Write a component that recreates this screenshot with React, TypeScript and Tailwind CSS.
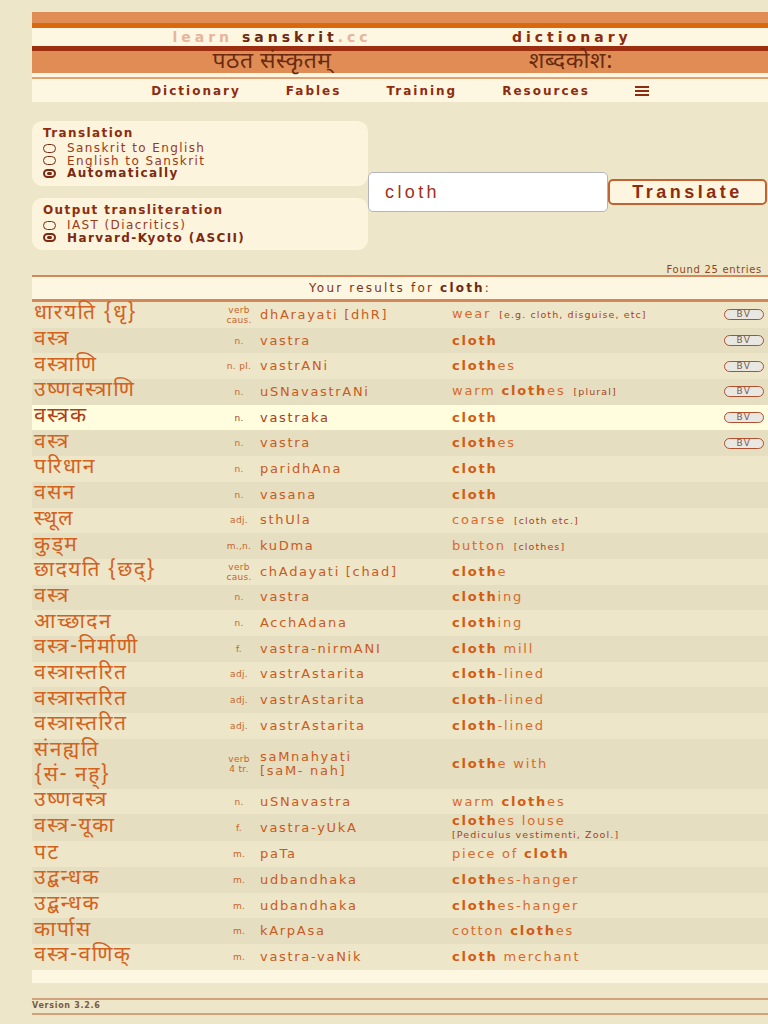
import React from "react";

type Entry = {
  dev: string | string[];
  gram: string[];
  tr: string | string[];
  en: string;
  note?: string;
  noteBelow?: boolean;
  bv?: boolean;
  hot?: boolean;
};

// "*cloth*es" -> bold "cloth" + plain "es"
const entries: Entry[] = [
  { dev: "धारयति {धृ}", gram: ["verb", "caus."], tr: "dhArayati [dhR]", en: "wear", note: "[e.g. cloth, disguise, etc]", bv: true },
  { dev: "वस्त्र", gram: ["n."], tr: "vastra", en: "*cloth*", bv: true },
  { dev: "वस्त्राणि", gram: ["n. pl."], tr: "vastrANi", en: "*cloth*es", bv: true },
  { dev: "उष्णवस्त्राणि", gram: ["n."], tr: "uSNavastrANi", en: "warm *cloth*es", note: "[plural]", bv: true },
  { dev: "वस्त्रक", gram: ["n."], tr: "vastraka", en: "*cloth*", bv: true, hot: true },
  { dev: "वस्त्र", gram: ["n."], tr: "vastra", en: "*cloth*es", bv: true },
  { dev: "परिधान", gram: ["n."], tr: "paridhAna", en: "*cloth*" },
  { dev: "वसन", gram: ["n."], tr: "vasana", en: "*cloth*" },
  { dev: "स्थूल", gram: ["adj."], tr: "sthUla", en: "coarse", note: "[cloth etc.]" },
  { dev: "कुड्म", gram: ["m.,n."], tr: "kuDma", en: "button", note: "[clothes]" },
  { dev: "छादयति {छद्}", gram: ["verb", "caus."], tr: "chAdayati [chad]", en: "*cloth*e" },
  { dev: "वस्त्र", gram: ["n."], tr: "vastra", en: "*cloth*ing" },
  { dev: "आच्छादन", gram: ["n."], tr: "AcchAdana", en: "*cloth*ing" },
  { dev: "वस्त्र-निर्माणी", gram: ["f."], tr: "vastra-nirmANI", en: "*cloth* mill" },
  { dev: "वस्त्रास्तरित", gram: ["adj."], tr: "vastrAstarita", en: "*cloth*-lined" },
  { dev: "वस्त्रास्तरित", gram: ["adj."], tr: "vastrAstarita", en: "*cloth*-lined" },
  { dev: "वस्त्रास्तरित", gram: ["adj."], tr: "vastrAstarita", en: "*cloth*-lined" },
  { dev: ["संनह्यति", "{सं- नह्}"], gram: ["verb", "4 tr."], tr: ["saMnahyati", "[saM- nah]"], en: "*cloth*e with" },
  { dev: "उष्णवस्त्र", gram: ["n."], tr: "uSNavastra", en: "warm *cloth*es" },
  { dev: "वस्त्र-यूका", gram: ["f."], tr: "vastra-yUkA", en: "*cloth*es louse", note: "[Pediculus vestimenti, Zool.]", noteBelow: true },
  { dev: "पट", gram: ["m."], tr: "paTa", en: "piece of *cloth*" },
  { dev: "उद्बन्धक", gram: ["m."], tr: "udbandhaka", en: "*cloth*es-hanger" },
  { dev: "उद्बन्धक", gram: ["m."], tr: "udbandhaka", en: "*cloth*es-hanger" },
  { dev: "कार्पास", gram: ["m."], tr: "kArpAsa", en: "cotton *cloth*es" },
  { dev: "वस्त्र-वणिक्", gram: ["m."], tr: "vastra-vaNik", en: "*cloth* merchant" },
];

const lines = (v: string | string[]) =>
  Array.isArray(v)
    ? v.map((s, i) => (
        <span key={i} className="block">
          {s}
        </span>
      ))
    : v;

function English({ text }: { text: string }) {
  return (
    <>
      {text.split("*").map((part, i) =>
        i % 2 ? (
          <b key={i} className="font-bold text-[#d25c12]">
            {part}
          </b>
        ) : (
          <span key={i}>{part}</span>
        )
      )}
    </>
  );
}

function Radio({ on, label }: { on?: boolean; label: string }) {
  return (
    <div className="flex items-center h-[12.5px]">
      <span
        className={`w-[13px] h-[9px] rounded-full flex items-center justify-center shrink-0 border-[#7c2a12] ${
          on ? "border-2" : "border-[1.5px]"
        }`}
      >
        {on && <span className="w-[5px] h-[3px] rounded-full bg-[#7c2a12]" />}
      </span>
      <span className={`ml-[11px] ${on ? "font-bold text-[#7c2a12]" : "text-[#9a3a1a]"}`}>{label}</span>
    </div>
  );
}

const deva = "font-['Noto_Sans_Devanagari','Lohit_Devanagari','FreeSans',sans-serif]";

export default function App() {
  return (
    <div className="min-h-[1024px] bg-[#ede6c8] font-['DejaVu_Sans',Verdana,sans-serif] overflow-hidden">
      <div className="ml-8 w-[736px] pt-3">
        {/* site header */}
        <div className="h-[11px] bg-[#df8d55]" />
        <div className="h-[5px] bg-[#d9690f]" />
        <div className="h-[18px] bg-[#fdf6e0] grid grid-cols-[480px_118px_1fr] items-center text-[14px] font-bold tracking-[4px] leading-none">
          <div className="text-center">
            <span className="text-[#e8b49c]">learn </span>
            <span className="text-[#6e2a10]">sanskrit</span>
            <span className="text-[#e8b49c]">.cc</span>
          </div>
          <div className="text-center text-[#8e2c10] whitespace-nowrap">dictionary</div>
        </div>
        <div className="h-[5px] bg-[#9b2f0f]" />
        <div className={`h-[22px] bg-[#df8d55] grid grid-cols-[480px_118px_1fr] items-center text-[23px] leading-[22px] tracking-[0.5px] text-[#6b2a10] ${deva}`}>
          <div className="text-center">पठत संस्कृतम्</div>
          <div className="text-center whitespace-nowrap">शब्दकोश:</div>
        </div>
        <div className="h-[4px] bg-[#fdf6e0]" />
        <div className="h-[2px] bg-[#e3a070]" />
        <nav className="h-[23px] bg-[#fdf6e0] flex items-center justify-center gap-[45px] text-[12px] font-bold tracking-[2px] text-[#8e2c10]">
          <span>Dictionary</span>
          <span>Fables</span>
          <span>Training</span>
          <span>Resources</span>
          <span className="flex flex-col gap-[2px] w-[14px]">
            <span className="h-[2px] bg-[#8e2c10]" />
            <span className="h-[2px] bg-[#8e2c10]" />
            <span className="h-[2px] bg-[#8e2c10]" />
          </span>
        </nav>

        {/* search form */}
        <div className="mt-[19px] flex items-start">
          <div className="w-[336px] flex flex-col gap-[12px] text-[12px] leading-[12.5px] tracking-[1.4px]">
            <div className="h-[65px] rounded-[10px] bg-[#fcf4dc] px-[11px] pt-[6px]">
              <div className="font-bold text-[#8e2c10] leading-[13px] mb-[2px]">Translation</div>
              <Radio label="Sanskrit to English" />
              <Radio label="English to Sanskrit" />
              <Radio on label="Automatically" />
            </div>
            <div className="h-[52px] rounded-[10px] bg-[#fcf4dc] px-[11px] pt-[6px]">
              <div className="font-bold text-[#8e2c10] leading-[13px] mb-[2px]">Output transliteration</div>
              <Radio label="IAST (Diacritics)" />
              <Radio on label="Harvard-Kyoto (ASCII)" />
            </div>
          </div>
          <div className="mt-[51px] w-[240px] h-[40px] bg-white border border-[#b4b4bc] rounded-[5px] flex items-center pl-[16px] font-['Liberation_Sans',Arial,sans-serif] text-[18px] tracking-[3.4px] text-[#a0301a]">
            cloth
          </div>
          <button className="mt-[58px] w-[159px] h-[26px] bg-[#fdf5e0] border-2 border-[#c06232] rounded-[5px] font-['Liberation_Sans',Arial,sans-serif] font-bold text-[18px] tracking-[3.5px] text-[#8e2c10] leading-none">
            Translate
          </button>
        </div>

        {/* results */}
        <div className="mt-[14px] h-[11px] text-right pr-[6px] text-[10px] leading-[11px] tracking-[0.7px] text-[#8c4624]">
          Found 25 entries
        </div>
        <div className="h-[2px] bg-[#d4885a]" />
        <div className="h-[22px] bg-[#fdf6e0] flex items-center justify-center text-[12px] tracking-[2.2px] text-[#7c3418]">
          Your results for&nbsp;<b className="font-bold text-[#6b2a10]">cloth</b>:
        </div>
        <div className="h-[3px] bg-[#d4885a]" />

        <table className="w-full table-fixed border-collapse">
          <colgroup>
            <col className="w-[190px]" />
            <col className="w-[34px]" />
            <col className="w-[192px]" />
            <col className="w-[272px]" />
            <col className="w-[48px]" />
          </colgroup>
          <tbody>
            {entries.map((e, i) => {
              const bg = e.hot ? "bg-[#fffddd]" : i % 2 ? "bg-[#e5dec0]" : "bg-[#ede6c8]";
              return (
                <tr key={i} className={`h-[25.7px] ${bg}`}>
                  <td className={`pl-[2px] align-middle text-[21px] leading-[25px] tracking-[1.5px] ${deva} ${e.hot ? "text-[#b23c14]" : "text-[#d3621d]"}`}>
                    {lines(e.dev)}
                  </td>
                  <td className={`text-center align-middle text-[9px] leading-[10px] tracking-[0.3px] ${e.hot ? "text-[#a8401c]" : "text-[#c8642a]"}`}>
                    {e.gram.map((g) => (
                      <span key={g} className="block whitespace-nowrap">
                        {g}
                      </span>
                    ))}
                  </td>
                  <td className={`pl-1 align-middle text-[13px] leading-[14px] tracking-[1.7px] whitespace-nowrap ${e.hot ? "text-[#a63e1c]" : "text-[#c95a22]"}`}>
                    {lines(e.tr)}
                  </td>
                  <td className="pl-1 align-middle text-[13px] leading-[14px] tracking-[1.8px] text-[#d96a2c] whitespace-nowrap">
                    <English text={e.en} />
                    {e.note && (
                      <span
                        className={`text-[9.5px] tracking-[1.1px] text-[#a4441e] ${
                          e.noteBelow ? "block leading-[13px]" : "ml-[8px]"
                        }`}
                      >
                        {e.note}
                      </span>
                    )}
                  </td>
                  <td className="align-middle">
                    {e.bv && (
                      <span className="mx-auto flex items-center justify-center w-[40px] h-[11px] rounded-full border border-[#b0502e] bg-[#e9e7e2] text-[9px] tracking-[1.5px] text-[#7e5a4c] leading-none">
                        BV
                      </span>
                    )}
                  </td>
                </tr>
              );
            })}
          </tbody>
        </table>
        <div className="h-[13px] bg-[#fdf6e0]" />

        {/* footer */}
        <div className="mt-[15px] h-[2px] bg-[#d2a27c]" />
        <div className="h-[13px] flex items-center text-[8px] font-bold tracking-[0.7px] text-[#7b5a40]">Version 3.2.6</div>
        <div className="h-[2px] bg-[#d2a27c]" />
      </div>
    </div>
  );
}
